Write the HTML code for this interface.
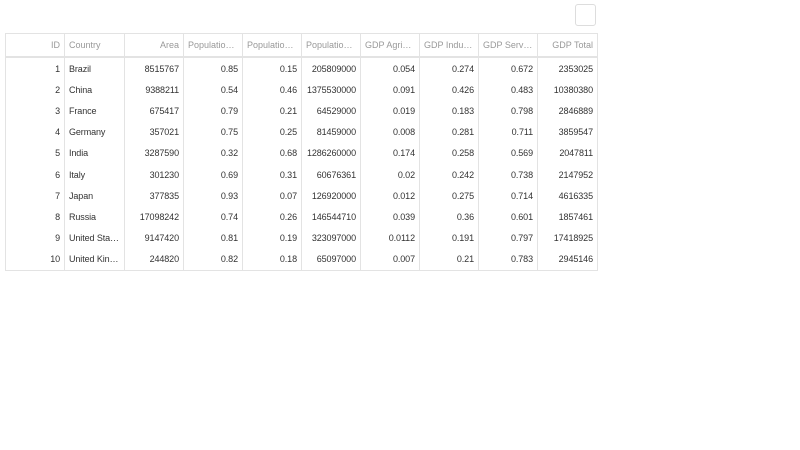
<!DOCTYPE html>
<html><head><style>
body{margin:0;width:800px;height:450px;background:#fff;font-family:"Liberation Sans",sans-serif;font-size:9px;color:#333;position:relative;overflow:hidden}
.btn{position:absolute;left:575px;top:4px;width:21px;height:22px;border:1px solid #ddd;border-radius:3px;box-sizing:border-box}
table{position:absolute;left:5px;top:33px;border-collapse:collapse;table-layout:fixed;width:593px}
td,th{border-left:1px solid #e3e3e3;border-right:1px solid #e3e3e3;padding:0 4px;white-space:nowrap;overflow:hidden;text-overflow:ellipsis;height:21.2px;text-align:right;font-weight:normal}
td{letter-spacing:-0.1px}
th{height:22px;color:#999;border-top:1px solid #e3e3e3;border-bottom:2px solid #e3e3e3}
tr:last-child td{border-bottom:1px solid #e3e3e3}
.l{text-align:left}
</style></head><body>
<div class="btn"></div>
<table>
<colgroup><col style="width:59px"><col style="width:60px"><col style="width:59px"><col style="width:59px"><col style="width:59px"><col style="width:59px"><col style="width:59px"><col style="width:59px"><col style="width:59px"><col style="width:60px"></colgroup>
<tr><th>ID</th><th class="l">Country</th><th>Area</th><th>Population…</th><th>Population…</th><th>Population…</th><th>GDP Agric…</th><th>GDP Indus…</th><th>GDP Servic…</th><th>GDP Total</th></tr>
<tr><td>1</td><td class="l">Brazil</td><td>8515767</td><td>0.85</td><td>0.15</td><td>205809000</td><td>0.054</td><td>0.274</td><td>0.672</td><td>2353025</td></tr>
<tr><td>2</td><td class="l">China</td><td>9388211</td><td>0.54</td><td>0.46</td><td>1375530000</td><td>0.091</td><td>0.426</td><td>0.483</td><td>10380380</td></tr>
<tr><td>3</td><td class="l">France</td><td>675417</td><td>0.79</td><td>0.21</td><td>64529000</td><td>0.019</td><td>0.183</td><td>0.798</td><td>2846889</td></tr>
<tr><td>4</td><td class="l">Germany</td><td>357021</td><td>0.75</td><td>0.25</td><td>81459000</td><td>0.008</td><td>0.281</td><td>0.711</td><td>3859547</td></tr>
<tr><td>5</td><td class="l">India</td><td>3287590</td><td>0.32</td><td>0.68</td><td>1286260000</td><td>0.174</td><td>0.258</td><td>0.569</td><td>2047811</td></tr>
<tr><td>6</td><td class="l">Italy</td><td>301230</td><td>0.69</td><td>0.31</td><td>60676361</td><td>0.02</td><td>0.242</td><td>0.738</td><td>2147952</td></tr>
<tr><td>7</td><td class="l">Japan</td><td>377835</td><td>0.93</td><td>0.07</td><td>126920000</td><td>0.012</td><td>0.275</td><td>0.714</td><td>4616335</td></tr>
<tr><td>8</td><td class="l">Russia</td><td>17098242</td><td>0.74</td><td>0.26</td><td>146544710</td><td>0.039</td><td>0.36</td><td>0.601</td><td>1857461</td></tr>
<tr><td>9</td><td class="l">United Stat…</td><td>9147420</td><td>0.81</td><td>0.19</td><td>323097000</td><td>0.0112</td><td>0.191</td><td>0.797</td><td>17418925</td></tr>
<tr><td>10</td><td class="l">United Kin…</td><td>244820</td><td>0.82</td><td>0.18</td><td>65097000</td><td>0.007</td><td>0.21</td><td>0.783</td><td>2945146</td></tr>
</table>
</body></html>
